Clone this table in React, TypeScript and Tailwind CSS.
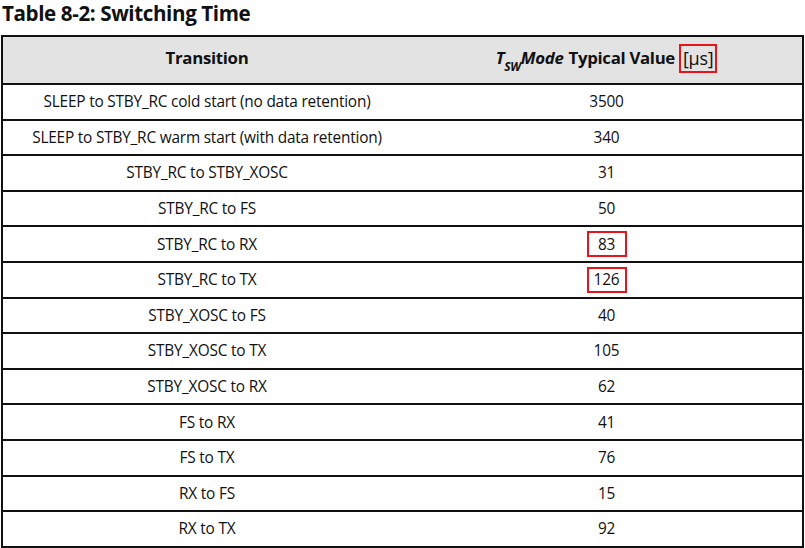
const rows: [string, string, boolean?][] = [
  ['SLEEP to STBY_RC cold start (no data retention)', '3500'],
  ['SLEEP to STBY_RC warm start (with data retention)', '340'],
  ['STBY_RC to STBY_XOSC', '31'],
  ['STBY_RC to FS', '50'],
  ['STBY_RC to RX', '83', true],
  ['STBY_RC to TX', '126', true],
  ['STBY_XOSC to FS', '40'],
  ['STBY_XOSC to TX', '105'],
  ['STBY_XOSC to RX', '62'],
  ['FS to RX', '41'],
  ['FS to TX', '76'],
  ['RX to FS', '15'],
  ['RX to TX', '92'],
]

export default function App() {
  return (
    <div className="h-[548px] w-[805px] bg-white text-[#111] font-['Open_Sans',sans-serif]">
      <h1 className="h-[35px] pl-[2px] text-[20.6px] font-bold leading-[26px] tracking-[-0.4px]">
        Table 8-2: Switching Time
      </h1>
      <div className="ml-[1px] w-[803px] border-x-2 border-t-2 border-[#111]">
        <div className="flex h-[48px] items-center border-b-2 border-[#111] bg-[#e3e3e3] pb-[4px] text-[16.8px] font-bold tracking-[-0.3px]">
          <div className="w-[408px] text-center">Transition</div>
          <div className="flex flex-1 items-center justify-center">
            <span className="italic">
              T<sub className="text-[12px] align-[-4px]">SW</sub>Mode
            </span>
            <span className="ml-[5px]">Typical Value</span>
            <span className="ml-[4px] flex h-[29px] items-center border-2 border-[#e8141b] px-[2px] text-[18px] font-normal">
              [µs]
            </span>
          </div>
        </div>
        {rows.map(([t, v, boxed]) => (
          <div key={t} className="flex h-[35.6px] items-center border-b-2 border-[#111] text-[15.4px] tracking-[-0.2px]">
            <div className="w-[408px] text-center">{t}</div>
            <div className="flex flex-1 justify-center">
              {boxed ? (
                <span className="flex h-[26px] w-[40px] items-center justify-center border-2 border-[#e8141b]">{v}</span>
              ) : (
                <span>{v}</span>
              )}
            </div>
          </div>
        ))}
      </div>
    </div>
  )
}
